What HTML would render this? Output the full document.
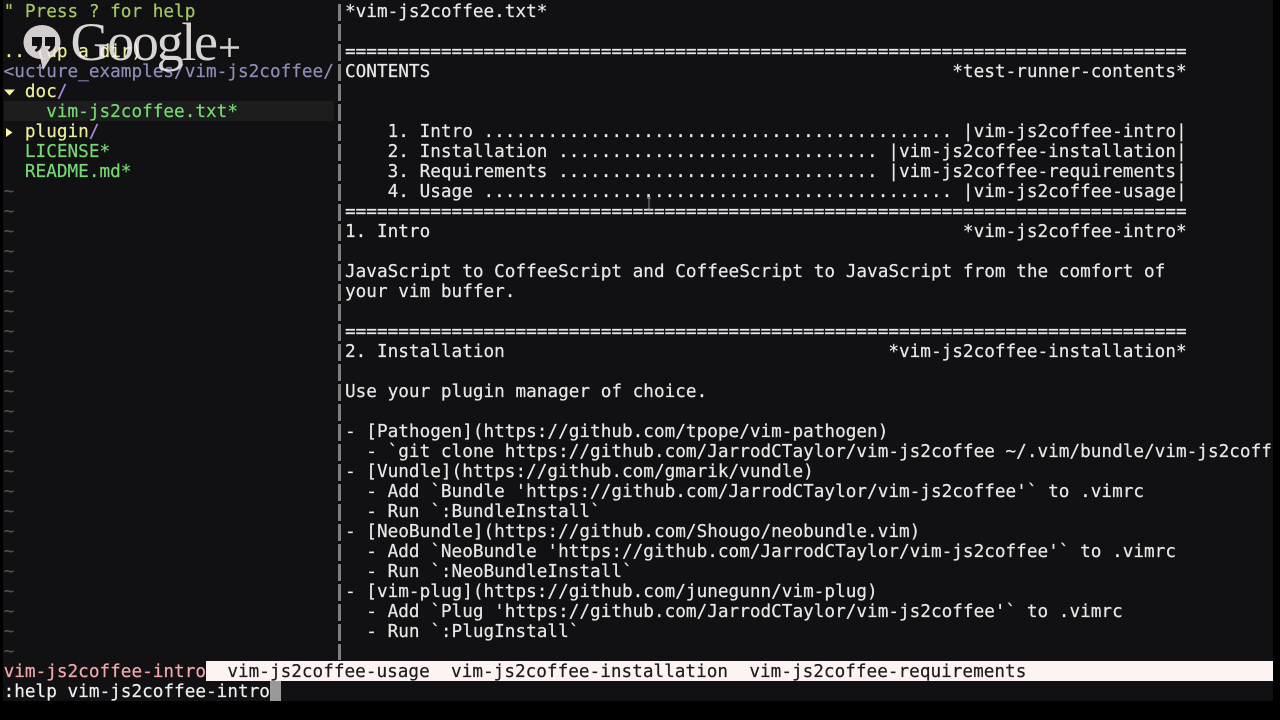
<!DOCTYPE html>
<html><head><meta charset="utf-8"><title>vim-js2coffee</title>
<style>
html,body{margin:0;padding:0;background:#000;width:1280px;height:720px;overflow:hidden}
#term{position:absolute;left:3px;top:0;width:1270px;height:701px;background:#111113}
pre{position:absolute;margin:0;font:17.7px/20px "DejaVu Sans Mono",monospace;letter-spacing:.005px;white-space:pre;filter:blur(.35px);-webkit-text-stroke:.2px currentColor}
#left{left:3.6px;top:2px;color:#666}
#right{left:345px;top:2px;color:#e8e8e8;width:928px;overflow:hidden}
#hl{position:absolute;left:4px;top:101px;width:330px;height:20px;background:#1d1d1d}
#sep{position:absolute;left:337.5px;top:4px;width:3px;height:656px;background:repeating-linear-gradient(#808080 0 17px,#111113 17px 20px)}
.g{color:#a3c866}.u{color:#8d8db8}.y{color:#eeee9a}.p{color:#a48ae0}.n{color:#76d975}.t{color:#585858;-webkit-text-stroke:0}
#bar{position:absolute;left:206px;top:661px;width:1067px;height:20px;background:#fdf3f3}
#st{left:3.6px;top:662px;color:#f2a9a9}
#st b{font-weight:normal;color:#1c1c1c;-webkit-text-stroke:.2px #1c1c1c}
#cmd{left:3.6px;top:682px;color:#eee}
#cur{position:absolute;left:270px;top:681px;width:11px;height:20px;background:#999}
#gp{position:absolute;left:0;top:0;width:260px;height:90px;opacity:.87}
#gt{position:absolute;left:70.500px;top:7px;font:54px/70px "Liberation Serif",serif;color:#f7f1f1;letter-spacing:-2.3px}
#gplus{position:absolute;left:220px;top:37.500px;width:19px;height:19px}
.tri{position:absolute}
</style></head><body>
<div id="term"></div>
<div id="hl"></div>
<div id="sep"></div>
<pre id="left"><span class="g">" Press ? for help</span>

<span class="y">.. (up a dir)</span>
<span class="u">&lt;ucture_examples/vim-js2coffee/</span>
<span class="y">  doc</span><span class="p">/</span>
<span class="n">    vim-js2coffee.txt*</span>
<span class="y">  plugin</span><span class="p">/</span>
<span class="n">  LICENSE*</span>
<span class="n">  README.md*</span>
<span class="t">~
~
~
~
~
~
~
~
~
~
~
~
~
~
~
~
~
~
~
~
~
~
~
~</span></pre>
<svg class="tri" style="left:0;top:80px" width="20" height="60" viewBox="0 0 20 60"><path d="M4 9.500h11L9.500 15.500z" fill="#f2f2a0"/><path d="M6 48l6.500 4.500L6 57z" fill="#f6f6a8"/></svg>
<pre id="right">*vim-js2coffee.txt*

===============================================================================
CONTENTS                                                 *test-runner-contents*


    1. Intro ............................................ |vim-js2coffee-intro|
    2. Installation .............................. |vim-js2coffee-installation|
    3. Requirements .............................. |vim-js2coffee-requirements|
    4. Usage ............................................ |vim-js2coffee-usage|
===============================================================================
1. Intro                                                  *vim-js2coffee-intro*

JavaScript to CoffeeScript and CoffeeScript to JavaScript from the comfort of
your vim buffer.

===============================================================================
2. Installation                                    *vim-js2coffee-installation*

Use your plugin manager of choice.

- [Pathogen](https://github.com/tpope/vim-pathogen)
  - `git clone https://github.com/JarrodCTaylor/vim-js2coffee ~/.vim/bundle/vim-js2coff
- [Vundle](https://github.com/gmarik/vundle)
  - Add `Bundle 'https://github.com/JarrodCTaylor/vim-js2coffee'` to .vimrc
  - Run `:BundleInstall`
- [NeoBundle](https://github.com/Shougo/neobundle.vim)
  - Add `NeoBundle 'https://github.com/JarrodCTaylor/vim-js2coffee'` to .vimrc
  - Run `:NeoBundleInstall`
- [vim-plug](https://github.com/junegunn/vim-plug)
  - Add `Plug 'https://github.com/JarrodCTaylor/vim-js2coffee'` to .vimrc
  - Run `:PlugInstall`</pre>
<div id="bar"></div>
<pre id="st">vim-js2coffee-intro<b>  vim-js2coffee-usage  vim-js2coffee-installation  vim-js2coffee-requirements</b></pre>
<pre id="cmd">:help vim-js2coffee-intro</pre>
<div id="cur"></div>
<svg style="position:absolute;left:644px;top:197px" width="10" height="14" viewBox="0 0 10 14"><path d="M3 1h1.500l.5 1 .5-1H7M5 2v9M3 12h1.500l.5-1 .5 1H7" fill="none" stroke="#888" stroke-width="1"/></svg>
<div id="gp">
<svg style="position:absolute;left:0;top:0" width="70" height="90" viewBox="0 0 70 90">
<path d="M42 25a18.500 17 0 0 1 18.500 17c0 7-4 12-9 14.500L43 70 40.500 59C30 58.500 23.500 51 23.500 42A18.500 17 0 0 1 42 25z" fill="#f1e9e9"/>
<path d="M32 37h10v7c0 4-2.500 6.500-6 8l-1.200-2.200c1.700-1 2.500-2.300 2.500-3.800H32zM45 37h10v7c0 4-2.500 6.500-6 8l-1.200-2.200c1.700-1 2.500-2.300 2.500-3.800H45z" fill="#111113"/>
</svg>
<div id="gt">Google</div>
<svg id="gplus" viewBox="0 0 19 19"><path d="M0 9.500h19M9.500 0v19" stroke="#f7f1f1" stroke-width="2.400"/></svg>
</div>
</body></html>
